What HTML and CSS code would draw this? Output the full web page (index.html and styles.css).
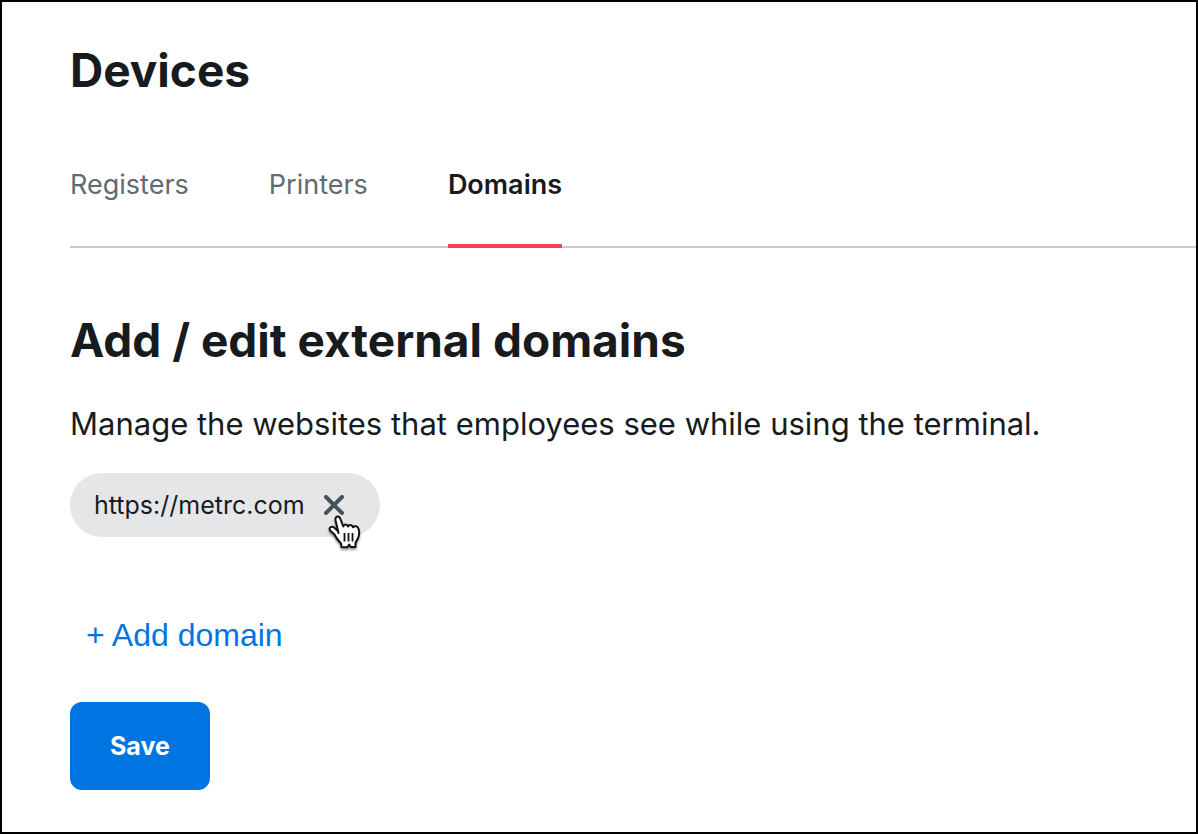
FILE: index.html
```
<!DOCTYPE html>
<html lang="en">
<head>
    <meta charset="UTF-8">
    <meta name="viewport" content="width=device-width, initial-scale=1.0">
    <title>Devices</title>
    <link rel="stylesheet" href="styles.css">
</head>
<body>
    <main class="page">
        <h1>Devices</h1>

        <nav class="tabs">
            <a href="#registers">Registers</a>
            <a href="#printers">Printers</a>
            <a href="#domains" class="active" aria-current="page">Domains</a>
        </nav>

        <h2>Add / edit external domains</h2>
        <p class="intro">Manage the websites that employees see while using the terminal.</p>

        <form class="domain-form">
            <div class="chip">
                <span>https://metrc.com</span>
                <button type="button" class="chip-remove" aria-label="Remove https://metrc.com">
                    <svg width="20" height="20" viewBox="0 0 20 20" fill="none" stroke="#46535a" stroke-width="4" stroke-linecap="round">
                        <path d="M2 2l16 16M18 2L2 18"/>
                    </svg>
                    <!-- hand pointer over the remove button -->
                    <svg class="pointer" width="34" height="38" viewBox="0 0 34 38">
                        <path d="M10.500 20L7.600 7.500C6.800 3 11 2 12.400 6L15.300 13.500C16.300 10.700 19.300 10.900 20 13.600C21.300 11.300 24.300 11.700 25 14.300C26.300 12.500 29.600 13 30.500 15.800C31.600 18.500 31.300 21.500 30.300 24.500L27.500 30L27.500 34L22.800 34L21.200 31.500L19.300 34.300L13.500 34L13 30.500C10.500 28 8.300 25.500 6.500 21.500L2 17.500C0.500 14.500 3.500 12.800 6.200 14.500L9.800 18Z" fill="#fff" stroke="#111" stroke-width="2" stroke-linejoin="round"/>
                        <path d="M16.500 20v8.500M20.500 20v8.500M24.500 20v8.500" fill="none" stroke="#111" stroke-width="1.800"/>
                    </svg>
                </button>
            </div>

            <button type="button" class="add-domain">+ Add domain</button>
            <button type="submit" class="save">Save</button>
        </form>
    </main>
</body>
</html>
```

FILE: styles.css
```
* {
    box-sizing: border-box;
}

body {
    margin: 0;
    background: #fff;
    color: #171b1e;
    font-family: Inter, "Liberation Sans", sans-serif;
}

.page {
    min-height: 100vh;
    padding: 40px 0 42px 68px;
    border: 2px solid #000;
}

h1, h2 {
    margin: 0;
    font-size: 46px;
    line-height: 56px;
    font-weight: 700;
}

.tabs {
    display: flex;
    gap: 80px;
    margin: 71px 0 64px;
    border-bottom: 2px solid #c8cbce;
}

.tabs a {
    margin-bottom: -2px;
    padding-bottom: 43px;
    border-bottom: 4px solid transparent;
    color: #606b70;
    font-size: 27px;
    line-height: 32px;
    text-decoration: none;
}

.tabs .active {
    border-color: #ff3f55;
    color: #171b1e;
    font-weight: 600;
}

.intro {
    margin: 36px 0 29px;
    font-size: 31px;
    line-height: 40px;
}

.domain-form {
    display: flex;
    flex-direction: column;
    align-items: flex-start;
}

button {
    padding: 0;
    border: none;
    background: none;
    font-family: inherit;
    cursor: pointer;
}

.chip {
    display: flex;
    align-items: center;
    gap: 19px;
    height: 64px;
    padding: 0 36px 0 24px;
    border-radius: 32px;
    background: #e4e6e8;
    font-size: 25px;
}

.chip-remove {
    position: relative;
    display: flex;
}

.pointer {
    position: absolute;
    top: 18px;
    left: 4px;
    filter: drop-shadow(0 2px 1px rgba(0, 0, 0, 0.4));
}

.add-domain {
    margin: 78px 0 47px;
    padding: 0 16px;
    color: #0075e2;
    font-family: "Liberation Sans", Arial, sans-serif;
    font-size: 32px;
    line-height: 40px;
}

.save {
    padding: 28px 40px;
    border-radius: 12px;
    background: #0075e2;
    color: #fff;
    font-size: 25px;
    line-height: 32px;
    font-weight: 700;
}
```
